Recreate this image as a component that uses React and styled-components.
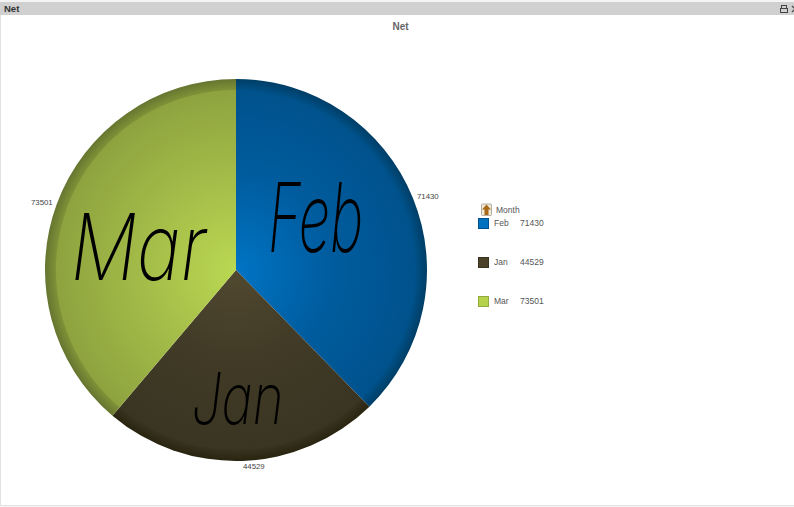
import React from 'react';
import styled, { createGlobalStyle } from 'styled-components';

const GlobalStyle = createGlobalStyle`
html, body {
  margin: 0;
  padding: 0;
  background: #ffffff;
  overflow: hidden;
}
`
const Frame = styled.div`
width: 794px;
height: 507px;
box-sizing: border-box;
padding-top: 2px;
display: flex;
flex-direction: column;
font-family: 'Liberation Sans', Arial, sans-serif;
background: #f4f4f4;
`
const Caption = styled.div`
height: 13px;
flex: none;
display: flex;
align-items: center;
justify-content: space-between;
padding-left: 4px;
background: #d0d0d0;
`
const CaptionTitle = styled.span`
font-size: 9.5px;
font-weight: 700;
color: #333333;
`
const CaptionIcons = styled.div`
display: flex;
align-items: center;
gap: 3px;
margin-right: -5px;
`
const Body = styled.div`
flex: none;
height: 491px;
box-sizing: border-box;
background: #ffffff;
border-left: 1px solid #e2e2e2;
border-bottom: 1px solid #e2e2e2;
display: flex;
flex-direction: column;
`
const ChartTitle = styled.div`
height: 21px;
flex: none;
box-sizing: border-box;
padding: 6px 0 0 6px;
text-align: center;
font-size: 10px;
font-weight: 700;
color: #666666;
`
const ChartRow = styled.div`
flex: 1;
display: flex;
`
const PieBox = styled.svg`
width: 477px;
height: 469px;
flex: none;
display: block;
`
const ValueLabel = styled.text`
font-family: 'Liberation Sans', Arial, sans-serif;
font-size: 7.8px;
fill: #444444;
`
const Scrawl = styled.text`
font-family: 'Inter', 'Liberation Sans', sans-serif;
font-style: italic;
font-weight: 200;
font-size: ${(p) => p.$size}px;
fill: #000000;
`
const Legend = styled.div`
padding-top: 166px;
display: flex;
flex-direction: column;
`
const LegendHead = styled.div`
display: flex;
align-items: center;
gap: 4px;
height: 15px;
padding-left: 2px;
font-size: 8.5px;
color: #555555;
`
const LegendRow = styled.div`
display: flex;
align-items: center;
height: 12px;
margin-bottom: 27px;
font-size: 8.5px;
color: #555555;
`
const Swatch = styled.span`
width: 9px;
height: 9px;
margin-right: 5px;
border: 1px solid ${(p) => p.$edge};
background: ${(p) => p.$color};
`
const RowName = styled.span`
width: 26px;
`

const cx = 235
const cy = 234
const r = 191

const point = (deg) => {
  const a = (deg * Math.PI) / 180
  return [cx + r * Math.sin(a), cy - r * Math.cos(a)]
}

const slicePath = (from, to) => {
  const [x1, y1] = point(from)
  const [x2, y2] = point(to)
  const large = to - from > 180 ? 1 : 0
  return `M${cx} ${cy}L${x1} ${y1}A${r} ${r} 0 ${large} 1 ${x2} ${y2}Z`
}

const slices = [
  { id: 'feb', from: 0, to: 135.7, stops: ['#0074c4', '#005c9e', '#00528c', '#004f85', '#003e66'] },
  { id: 'jan', from: 135.7, to: 220.3, stops: ['#51482f', '#403a26', '#3a3522', '#37321f', '#28240f'] },
  { id: 'mar', from: 220.3, to: 360, stops: ['#bad852', '#a3bb48', '#8ea33f', '#7f9037', '#667530'] },
]

const legend = [
  { name: 'Feb', value: '71430', color: '#0070c0', edge: '#00528f' },
  { name: 'Jan', value: '44529', color: '#4b4229', edge: '#38321f' },
  { name: 'Mar', value: '73501', color: '#b5d24b', edge: '#93ab3c' },
]

const UpArrowIcon = () => (
  <svg width="12" height="13" viewBox="0 0 12 13">
    <rect x="1.5" y="1" width="10" height="11.5" rx="1" fill="#f1ead9" stroke="#a59d8c" strokeWidth="0.8" />
    <path d="M6.5 1.5 L11 6.5 H8.5 V12 H4.5 V6.5 H2 Z" fill="#a9691a" />
  </svg>
)

const CaptionIconSet = () => (
  <CaptionIcons>
    <svg width="8" height="8" viewBox="0 0 8 8" fill="none" stroke="#444444" strokeWidth="1">
      <rect x="1.5" y="0.5" width="5" height="3" />
      <rect x="0.5" y="3.5" width="7" height="4" />
    </svg>
    <svg width="8" height="8" viewBox="0 0 8 8" fill="none" stroke="#444444" strokeWidth="1.2">
      <path d="M1 1L7 7M7 1L1 7" />
    </svg>
  </CaptionIcons>
)

const App = () => {
  return (
    <Frame>
      <GlobalStyle />
      <Caption>
        <CaptionTitle>Net</CaptionTitle>
        <CaptionIconSet />
      </Caption>
      <Body>
        <ChartTitle>Net</ChartTitle>
        <ChartRow>
          <PieBox viewBox="0 0 477 469">
            <defs>
              {slices.map((s) => (
                <radialGradient key={s.id} id={s.id} gradientUnits="userSpaceOnUse" cx={cx} cy={cy} r={r}>
                  <stop offset="0" stopColor={s.stops[0]} />
                  <stop offset="0.5" stopColor={s.stops[1]} />
                  <stop offset="0.94" stopColor={s.stops[2]} />
                  <stop offset="0.945" stopColor={s.stops[3]} />
                  <stop offset="1" stopColor={s.stops[4]} />
                </radialGradient>
              ))}
            </defs>
            {slices.map((s) => (
              <path key={s.id} d={slicePath(s.from, s.to)} fill={`url(#${s.id})`} />
            ))}
            <Scrawl transform="translate(267 216) scale(0.585 1)" $size={96}>Feb</Scrawl>
            <Scrawl transform="translate(70 244) scale(0.8 1)" $size={92}>Mar</Scrawl>
            <Scrawl transform="translate(191 388) scale(0.73 1)" $size={72}>Jan</Scrawl>
            <ValueLabel x="416" y="163">71430</ValueLabel>
            <ValueLabel x="30" y="169">73501</ValueLabel>
            <ValueLabel x="242" y="433">44529</ValueLabel>
          </PieBox>
          <Legend>
            <LegendHead>
              <UpArrowIcon />
              Month
            </LegendHead>
            {legend.map((l) => (
              <LegendRow key={l.name}>
                <Swatch $color={l.color} $edge={l.edge} />
                <RowName>{l.name}</RowName>
                {l.value}
              </LegendRow>
            ))}
          </Legend>
        </ChartRow>
      </Body>
    </Frame>
  );
}

export default App;
